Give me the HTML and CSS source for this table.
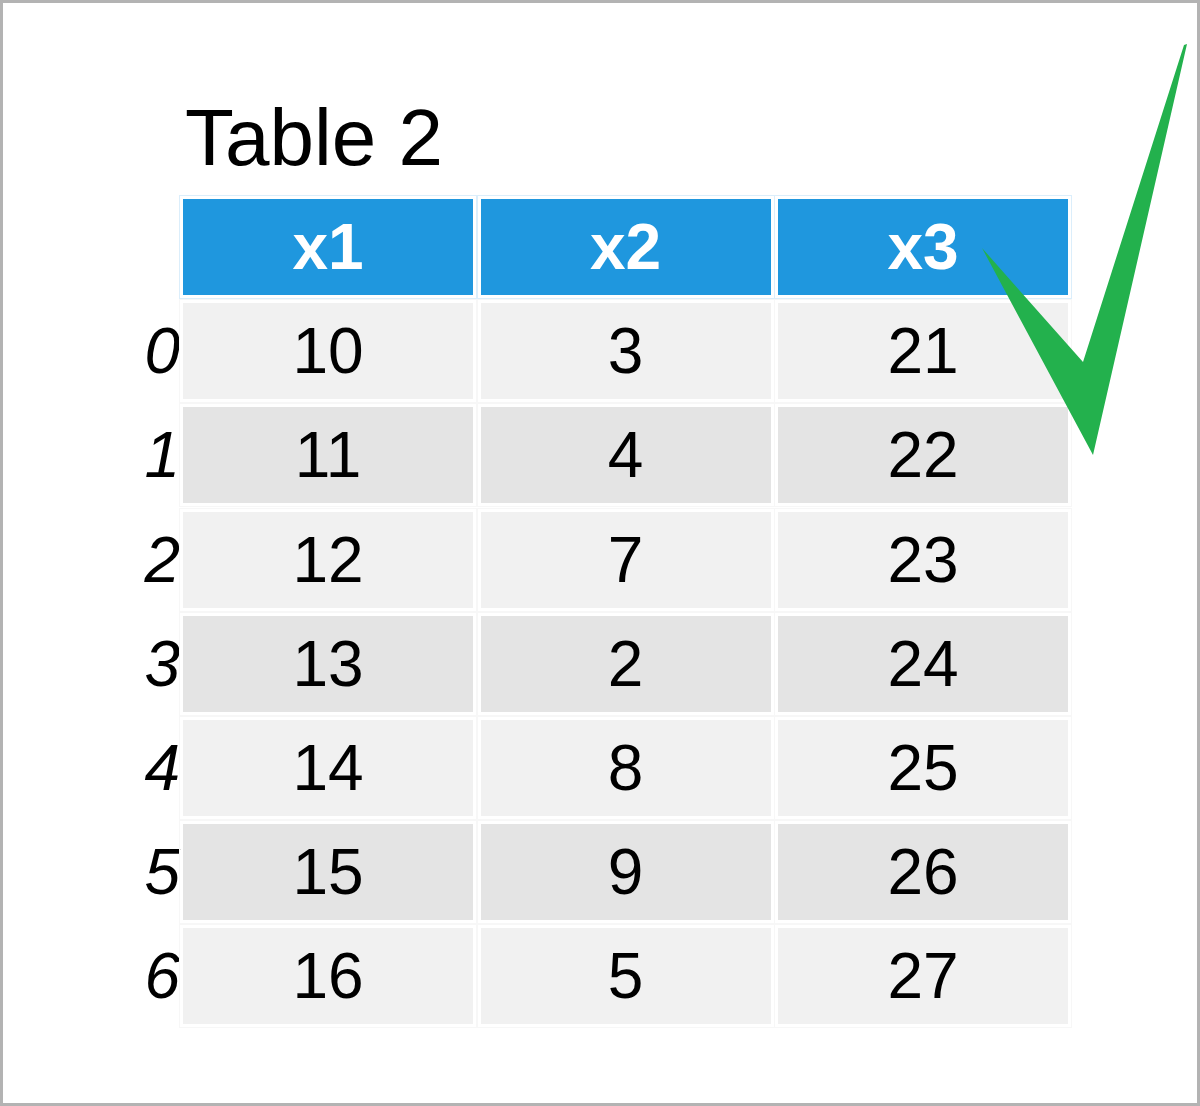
FILE: index.html
```html
<!DOCTYPE html>
<html lang="en">
<head>
<meta charset="utf-8">
<title>Table 2</title>
<link rel="stylesheet" href="styles.css">
</head>
<body>
<div class="frame">
  <h1 class="title">Table 2</h1>
  <div class="table">
    <div class="row head">
      <div class="idx"></div>
      <div class="cell">x1</div>
      <div class="cell">x2</div>
      <div class="cell">x3</div>
    </div>
    <div class="row light">
      <div class="idx">0</div>
      <div class="cell">10</div>
      <div class="cell">3</div>
      <div class="cell">21</div>
    </div>
    <div class="row dark">
      <div class="idx">1</div>
      <div class="cell">11</div>
      <div class="cell">4</div>
      <div class="cell">22</div>
    </div>
    <div class="row light">
      <div class="idx">2</div>
      <div class="cell">12</div>
      <div class="cell">7</div>
      <div class="cell">23</div>
    </div>
    <div class="row dark">
      <div class="idx">3</div>
      <div class="cell">13</div>
      <div class="cell">2</div>
      <div class="cell">24</div>
    </div>
    <div class="row light">
      <div class="idx">4</div>
      <div class="cell">14</div>
      <div class="cell">8</div>
      <div class="cell">25</div>
    </div>
    <div class="row dark">
      <div class="idx">5</div>
      <div class="cell">15</div>
      <div class="cell">9</div>
      <div class="cell">26</div>
    </div>
    <div class="row light">
      <div class="idx">6</div>
      <div class="cell">16</div>
      <div class="cell">5</div>
      <div class="cell">27</div>
    </div>
  </div>
  <svg class="check" viewBox="970 30 230 440" width="230" height="440" aria-hidden="true">
    <polygon points="982,248 1083,362 1184,45 1187,44 1093,455" fill="#23b14d"/>
  </svg>
</div>
</body>
</html>
```

FILE: styles.css
```css
* {
  box-sizing: border-box;
}

html, body {
  margin: 0;
  padding: 0;
  background: #ffffff;
}

.frame {
  position: relative;
  width: 1200px;
  height: 1106px;
  border: 3px solid #b3b3b3;
  padding: 95px 0 0 0;
  font-family: "Liberation Sans", Arial, sans-serif;
  color: #000000;
  overflow: hidden;
}

.title {
  margin: 0 0 21px 0;
  padding-left: 182px;
  font-size: 80px;
  line-height: 80px;
  font-weight: normal;
}

.table {
  display: flex;
  flex-direction: column;
  gap: 8.2px;
}

.row {
  display: flex;
  height: 96px;
  font-size: 64px;
}

.idx {
  width: 177px;
  margin-right: 3px;
  display: flex;
  align-items: center;
  justify-content: flex-end;
  font-style: italic;
}

.cell {
  width: 290px;
  display: flex;
  align-items: center;
  justify-content: center;
  outline: 1px solid #f7f7f7;
  outline-offset: 3px;
}

.cell + .cell {
  margin-left: 7.5px;
}

.head .cell {
  background: #1f97de;
  color: #ffffff;
  font-weight: bold;
  outline-color: #dbeefb;
}

.light .cell {
  background: #f1f1f1;
}

.dark .cell {
  background: #e4e4e4;
}

.check {
  position: absolute;
  left: 967px;
  top: 27px;
  width: 230px;
  height: 440px;
  pointer-events: none;
}
```
